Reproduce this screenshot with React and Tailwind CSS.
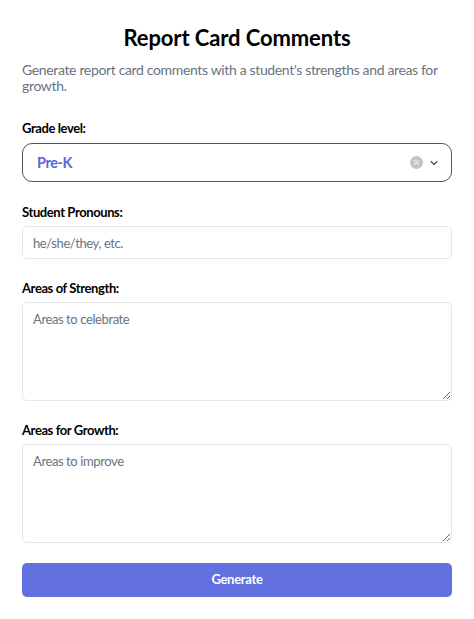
import React, { useState } from 'react'

function App() {
  const [grade, setGrade] = useState("Pre-K")
  const [pronouns, setPronouns] = useState("")
  const [strengths, setStrengths] = useState("")
  const [growth, setGrowth] = useState("")

  return (
    <div className="min-h-screen bg-white px-[22px] pt-[23px] pb-6 font-['Lato',sans-serif] text-black">
      {/* Header */}
      <h1 className="text-center text-[22px] font-bold leading-[30px] tracking-[-0.1px]">Report Card Comments</h1>
      <p className="mt-[9px] text-[14px] leading-[16px] tracking-[-0.35px] text-gray-500">
        Generate report card comments with a student's strengths and areas for growth.
      </p>

      {/* Grade level */}
      <label className="block mt-[25px] mb-[6px] text-[13px] font-bold leading-[18px] tracking-[-0.4px]">Grade level:</label>
      <div className="flex items-center h-[39px] border-[1.5px] border-[#555] rounded-[10px] pl-[14px] pr-[12px]">
        <span className="flex-1 text-[14.5px] font-bold tracking-[-0.4px] text-[#5a67d8]">{grade}</span>
        <button type="button" onClick={() => setGrade("")} className="w-[13px] h-[13px] rounded-full bg-[#c4c4c4] flex items-center justify-center">
          <svg width="7" height="7" viewBox="0 0 7 7">
            <path d="M1.5 1.5L5.5 5.5M5.5 1.5L1.5 5.5" stroke="#e8e8e8" strokeWidth="1.3" strokeLinecap="round" />
          </svg>
        </button>
        <svg className="ml-[6px]" width="10" height="10" viewBox="0 0 10 10" fill="none">
          <path d="M2 3.5L5 6.5L8 3.5" stroke="#555" strokeWidth="1.3" strokeLinecap="round" strokeLinejoin="round" />
        </svg>
      </div>

      {/* Pronouns */}
      <label className="block mt-[21px] mb-[5px] text-[13px] font-bold leading-[18px] tracking-[-0.4px]">Student Pronouns:</label>
      <input
        type="text"
        className="block w-full h-[33px] px-[10px] border border-gray-200 rounded-[5px] text-[13px] tracking-[-0.4px] placeholder:text-gray-500 outline-none"
        placeholder="he/she/they, etc."
        value={pronouns}
        onChange={(e) => setPronouns(e.target.value)}
      />

      {/* Strength */}
      <label className="block mt-[20px] mb-[5px] text-[13px] font-bold leading-[18px] tracking-[-0.4px]">Areas of Strength:</label>
      <textarea
        className="block w-full h-[99px] px-[10px] py-[7px] border border-gray-200 rounded-[5px] text-[13px] tracking-[-0.4px] placeholder:text-gray-500 outline-none"
        placeholder="Areas to celebrate"
        value={strengths}
        onChange={(e) => setStrengths(e.target.value)}
      />

      {/* Growth */}
      <label className="block mt-[20px] mb-[5px] text-[13px] font-bold leading-[18px] tracking-[-0.4px]">Areas for Growth:</label>
      <textarea
        className="block w-full h-[99px] px-[10px] py-[7px] border border-gray-200 rounded-[5px] text-[13px] tracking-[-0.4px] placeholder:text-gray-500 outline-none"
        placeholder="Areas to improve"
        value={growth}
        onChange={(e) => setGrowth(e.target.value)}
      />

      <button className="block mt-[20px] w-full h-[34px] rounded-[5px] bg-[#6370e0] text-white text-[13px] font-bold tracking-[-0.3px]">
        Generate
      </button>
    </div>
  )
}

export default App
